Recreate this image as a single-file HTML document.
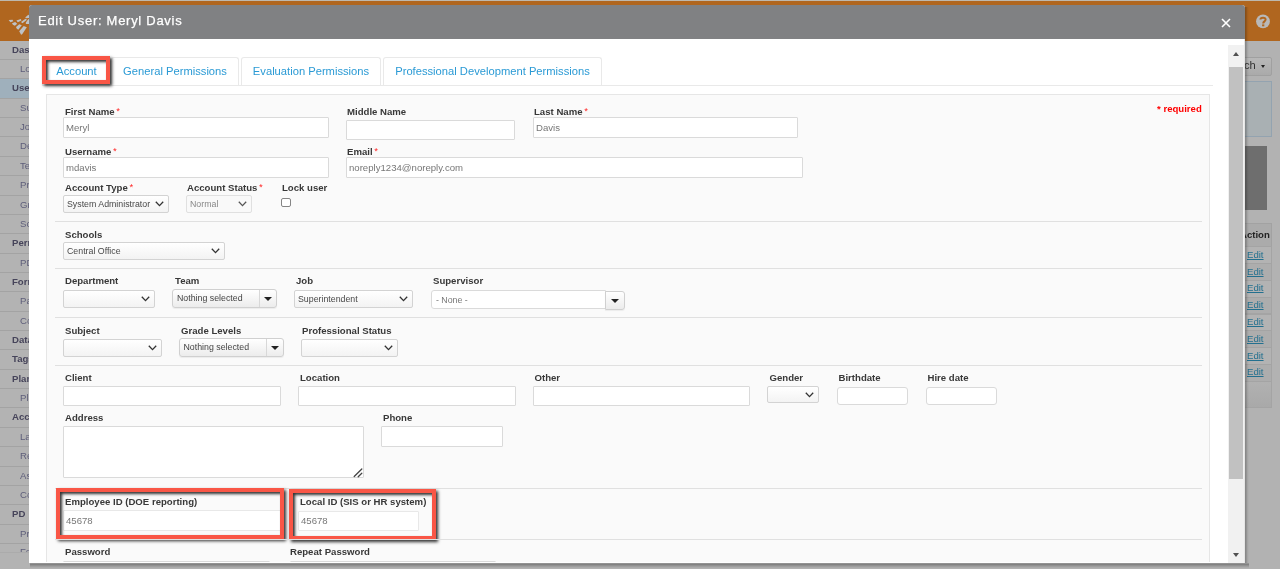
<!DOCTYPE html>
<html><head><meta charset="utf-8">
<style>
*{box-sizing:border-box;margin:0;padding:0}
html,body{width:1280px;height:569px;overflow:hidden;background:#b2b2b2;font-family:"Liberation Sans",sans-serif;-webkit-font-smoothing:antialiased}
.a{position:absolute}
.si{position:absolute;left:0;width:30px;height:19.36px;border-bottom:1px solid #a3a3a3;font-size:9.6px;color:#5e5e7a;white-space:nowrap;overflow:hidden;line-height:17.5px}
.si.b{font-weight:bold;color:#46445a}
.lbl{position:absolute;font-size:9.6px;font-weight:bold;color:#383838;white-space:nowrap;line-height:11px}
.req{color:#f22;font-weight:normal;font-size:9.6px;margin-left:-1px;position:relative;top:-1px}
.inp{position:absolute;background:#fff;border:1px solid #dadada;border-radius:1px;font-size:9.6px;color:#777;white-space:nowrap;padding-left:2px;padding-top:1px;line-height:18px}
.sel{position:absolute;background:linear-gradient(#fff,#f3f3f3);border:1px solid #d3d3d3;border-radius:2px;font-size:8.8px;color:#484848;white-space:nowrap;padding-left:3px;line-height:16px}
.chev{position:absolute;top:5px;width:9px;height:6px}
.sep{position:absolute;left:55px;width:1147px;height:1px;background:#e0e0e0}
.tab{position:absolute;top:56.5px;height:28.5px;border:1px solid #e9e9e9;border-bottom:none;border-radius:3px 3px 0 0;background:#fff;font-size:11.2px;color:#2a9ad5;white-space:nowrap;line-height:26px;text-align:center}
.redbox{position:absolute;border:4px solid #f95646;box-shadow:2px 2px 3px rgba(0,0,0,.8), inset 2px 2px 3px rgba(0,0,0,.8)}
.bs{position:absolute;background:linear-gradient(#fff,#ececec);border:1px solid #d0d0d0;border-radius:3px;box-shadow:0 1px 1px rgba(0,0,0,.06);font-size:8.8px;color:#444;white-space:nowrap;line-height:17px;padding-left:4px}
.bs i{position:absolute;top:0;bottom:0;width:0;border-left:1px solid #d8d8d8}
.caret{position:absolute;width:0;height:0;border-left:4px solid transparent;border-right:4px solid transparent;border-top:4px solid #222}
</style></head><body>
<div id="root" style="position:absolute;left:0;top:0;width:1280px;height:569px;overflow:hidden;will-change:transform">
<div class="a" style="left:0;top:0;width:1280px;height:1px;background:#bdb8ad"></div>
<div class="a" style="left:0;top:1px;width:1280px;height:40px;background:#b0661f"></div>
<svg class="a" style="left:0;top:0" width="30" height="40" viewBox="0 0 30 40">
 <g fill="#bec2c6">
  <polygon points="8.7,20.1 12.6,19.7 13.3,21.3 10.4,22.2"/>
  <polygon points="16.4,20.4 20.8,19.0 21.4,20.6 17.8,22.2"/>
  <polygon points="21.0,21.9 25.4,18.8 27.0,19.8 22.4,23.3"/>
  <polygon points="25.2,17.4 28.3,14.7 29,15.2 29,17.9 26.2,18.2"/>
  <polygon points="12.0,23.3 15.1,22.0 17.2,23.8 14.9,25.8 12.9,24.8"/>
  <polygon points="16.0,27.1 19.3,24.2 21.8,25.2 18.3,29.8 16.8,28.8"/>
  <polygon points="25.6,22.9 28.1,19.2 29,19.2 29,23.9 26.2,23.9"/>
  <polygon points="19.2,31.3 23.7,26.1 26.8,27.2 22.2,34.2 21.1,34.7"/>
 </g>
</svg>
<svg class="a" style="left:1255px;top:14px" width="16" height="16" viewBox="0 0 16 16"><circle cx="8" cy="7.4" r="6.9" fill="#b9b9b9"/><path d="M5.4 5.6C5.4 3.2 10.6 3.0 10.6 5.6C10.6 7.4 8.2 7.3 8.2 9.4" fill="none" stroke="#b0661f" stroke-width="2"/><rect x="7.1" y="10.4" width="2.2" height="1.9" fill="#b0661f"/></svg>
<div class="a" style="left:0;top:41px;width:30px;height:528px;background:#b3b3b3"></div>
<div class="si b" style="top:40.64px"><span style="position:absolute;left:12px">Dashboard</span></div>
<div class="si" style="top:60.00px"><span style="position:absolute;left:20px">Login As</span></div>
<div class="si b" style="top:79.36px;background:#9fb0bc"><span style="position:absolute;left:12px">Users</span></div>
<div class="si" style="top:98.72px"><span style="position:absolute;left:20px">Summary</span></div>
<div class="si" style="top:118.08px"><span style="position:absolute;left:20px">Jobs</span></div>
<div class="si" style="top:137.44px"><span style="position:absolute;left:20px">Departments</span></div>
<div class="si" style="top:156.80px"><span style="position:absolute;left:20px">Teams</span></div>
<div class="si" style="top:176.16px"><span style="position:absolute;left:20px">Professional</span></div>
<div class="si" style="top:195.52px"><span style="position:absolute;left:20px">Grade</span></div>
<div class="si" style="top:214.88px"><span style="position:absolute;left:20px">Schools</span></div>
<div class="si b" style="top:234.24px"><span style="position:absolute;left:12px">Permissions</span></div>
<div class="si" style="top:253.60px"><span style="position:absolute;left:20px">PD</span></div>
<div class="si b" style="top:272.96px"><span style="position:absolute;left:12px">Forms</span></div>
<div class="si" style="top:292.32px"><span style="position:absolute;left:20px">Pages</span></div>
<div class="si" style="top:311.68px"><span style="position:absolute;left:20px">Components</span></div>
<div class="si b" style="top:331.04px"><span style="position:absolute;left:12px">Data</span></div>
<div class="si b" style="top:350.40px"><span style="position:absolute;left:12px">Tags</span></div>
<div class="si b" style="top:369.76px"><span style="position:absolute;left:12px">Plans</span></div>
<div class="si" style="top:389.12px"><span style="position:absolute;left:20px">Plan</span></div>
<div class="si b" style="top:408.48px"><span style="position:absolute;left:12px">Accounts</span></div>
<div class="si" style="top:427.84px"><span style="position:absolute;left:20px">Languages</span></div>
<div class="si" style="top:447.20px"><span style="position:absolute;left:20px">Reports</span></div>
<div class="si" style="top:466.56px"><span style="position:absolute;left:20px">Assessments</span></div>
<div class="si" style="top:485.92px"><span style="position:absolute;left:20px">Config</span></div>
<div class="si b" style="top:505.28px"><span style="position:absolute;left:12px">PD</span></div>
<div class="si" style="top:524.64px"><span style="position:absolute;left:20px">Programs</span></div>
<div class="a" style="left:0;top:544px;width:30px;height:9px;overflow:hidden"><div class="si" style="top:0;border-bottom:none;line-height:15px"><span style="position:absolute;left:20px">Forms</span></div></div>
<div class="a" style="left:0;top:552px;width:30px;height:1px;background:#ababab"></div>
<!-- background right content -->
<div class="a" style="left:1230px;top:57px;width:42px;height:18.5px;background:linear-gradient(#b8b8b8,#aaaaaa);border:1px solid #a0a0a0;border-radius:2px;font-size:11.2px;color:#333;line-height:15px;padding-left:13px;white-space:nowrap">ch</div>
<div class="caret a" style="left:1260.5px;top:65px;border-left-width:2.7px;border-right-width:2.7px;border-top:3.4px solid #222"></div>
<div class="a" style="left:1230px;top:81px;width:42px;height:55.5px;background:#a9b0b3;border:1px solid #93a3b0"></div>
<div class="a" style="left:1230px;top:146px;width:37.3px;height:63.6px;background:#6e6e6e"></div>
<div class="a" style="left:1230px;top:222.6px;width:42px;height:24px;background:#ababab;border:1px solid #a2a2a2;border-left:none;font-size:9.6px;font-weight:bold;color:#222;line-height:22px;padding-left:10px;white-space:nowrap">Action</div>
<div class="a" style="left:1230px;top:246.3px;width:42px;height:17.8px;background:#b3b3b3;border:1px solid #a4a4a4;border-left:none"></div>
<div class="a" style="left:1247px;top:248.8px;font-size:9.6px;color:#23708f;text-decoration:underline;line-height:11px">Edit</div>
<div class="a" style="left:1230px;top:263.1px;width:42px;height:17.8px;background:#adadad;border:1px solid #a4a4a4;border-left:none"></div>
<div class="a" style="left:1247px;top:265.6px;font-size:9.6px;color:#23708f;text-decoration:underline;line-height:11px">Edit</div>
<div class="a" style="left:1230px;top:279.9px;width:42px;height:17.8px;background:#b3b3b3;border:1px solid #a4a4a4;border-left:none"></div>
<div class="a" style="left:1247px;top:282.4px;font-size:9.6px;color:#23708f;text-decoration:underline;line-height:11px">Edit</div>
<div class="a" style="left:1230px;top:296.7px;width:42px;height:17.8px;background:#adadad;border:1px solid #a4a4a4;border-left:none"></div>
<div class="a" style="left:1247px;top:299.2px;font-size:9.6px;color:#23708f;text-decoration:underline;line-height:11px">Edit</div>
<div class="a" style="left:1230px;top:313.5px;width:42px;height:17.8px;background:#b3b3b3;border:1px solid #a4a4a4;border-left:none"></div>
<div class="a" style="left:1247px;top:316.0px;font-size:9.6px;color:#23708f;text-decoration:underline;line-height:11px">Edit</div>
<div class="a" style="left:1230px;top:330.3px;width:42px;height:17.8px;background:#adadad;border:1px solid #a4a4a4;border-left:none"></div>
<div class="a" style="left:1247px;top:332.8px;font-size:9.6px;color:#23708f;text-decoration:underline;line-height:11px">Edit</div>
<div class="a" style="left:1230px;top:347.1px;width:42px;height:17.8px;background:#b3b3b3;border:1px solid #a4a4a4;border-left:none"></div>
<div class="a" style="left:1247px;top:349.6px;font-size:9.6px;color:#23708f;text-decoration:underline;line-height:11px">Edit</div>
<div class="a" style="left:1230px;top:363.9px;width:42px;height:17.8px;background:#adadad;border:1px solid #a4a4a4;border-left:none"></div>
<div class="a" style="left:1247px;top:366.4px;font-size:9.6px;color:#23708f;text-decoration:underline;line-height:11px">Edit</div>
<div class="a" style="left:1230px;top:380.7px;width:42px;height:27.1px;background:linear-gradient(#b1b1b1,#a9a9a9);border:1px solid #a4a4a4;border-left:none"></div>
<!-- modal -->
<div class="a" style="left:29px;top:5px;width:1216px;height:557.7px;background:#fff;border-radius:3px 3px 0 0"></div>
<div class="a" style="left:30px;top:562.7px;width:1219px;height:5px;background:linear-gradient(rgba(0,0,0,.12),rgba(0,0,0,.27) 30%,rgba(0,0,0,.12) 65%,rgba(0,0,0,0))"></div>
<div class="a" style="left:1245px;top:7px;width:4px;height:556px;background:linear-gradient(90deg,rgba(0,0,0,.26),rgba(0,0,0,.18) 35%,rgba(0,0,0,.06) 65%,rgba(0,0,0,0))"></div>
<div class="a" style="left:29px;top:5px;width:1216px;height:33.5px;background:#808183;border-radius:3px 3px 0 0"></div>
<div class="a" style="left:38px;top:12px;font-size:13px;letter-spacing:0.72px;-webkit-text-stroke:0.25px #fff;color:#fff;white-space:nowrap;line-height:18px">Edit User: Meryl Davis</div>
<svg class="a" style="left:1221px;top:18px" width="10" height="10" viewBox="0 0 10 10"><path d="M1 1L9 9M9 1L1 9" stroke="#fff" stroke-width="1.6"/></svg>

<div class="a" style="left:0;top:0;width:1245px;height:561.8px;overflow:hidden">
<!-- tabs -->
<!--tabline-->
<div class="tab" style="left:42px;width:69px">Account</div>
<div class="tab" style="left:111px;width:128px">General Permissions</div>
<div class="tab" style="left:241px;width:140px">Evaluation Permissions</div>
<div class="tab" style="left:383px;width:219px">Professional Development Permissions</div>
<div class="a" style="left:42px;top:85px;width:1171px;height:1px;background:#e9e9e9"></div>
<div class="redbox" style="left:42px;top:55.5px;width:68px;height:28.5px"></div>

<!-- panel -->
<div class="a" style="left:46px;top:94.3px;width:1164px;height:480px;background:#fafafa;border:1px solid #e6e6e6"></div>
<div class="a" style="left:1157px;top:103px;font-size:9.6px;font-weight:bold;color:#f00;white-space:nowrap">* required</div>

<div class="lbl" style="left:65px;top:106px">First Name <span class="req">*</span></div>
<div class="inp" style="left:63px;top:117px;width:266px;height:21px">Meryl</div>
<div class="lbl" style="left:347px;top:106px">Middle Name</div>
<div class="inp" style="left:346px;top:120px;width:169px;height:20px"></div>
<div class="lbl" style="left:534px;top:106px">Last Name <span class="req">*</span></div>
<div class="inp" style="left:533px;top:117px;width:265px;height:21px">Davis</div>

<div class="lbl" style="left:65px;top:146px">Username <span class="req">*</span></div>
<div class="inp" style="left:63px;top:157px;width:266px;height:21px">mdavis</div>
<div class="lbl" style="left:347px;top:146px">Email <span class="req">*</span></div>
<div class="inp" style="left:346px;top:157px;width:457px;height:21px">noreply1234@noreply.com</div>

<div class="lbl" style="left:65px;top:182px">Account Type <span class="req">*</span></div>
<div class="sel" style="left:63px;top:194.5px;width:106px;height:18px">System Administrator<svg class="chev" style="left:91px" viewBox="0 0 9 6"><path d="M0.8 0.8L4.5 4.6L8.2 0.8" fill="none" stroke="#333" stroke-width="1.35"/></svg></div>
<div class="lbl" style="left:187px;top:182px">Account Status <span class="req">*</span></div>
<div class="sel" style="left:186px;top:194.5px;width:66px;height:18px;color:#888;border-color:#e0e0e0;background:#f9f9f9">Normal<svg class="chev" style="left:51px" viewBox="0 0 9 6"><path d="M0.8 0.8L4.5 4.6L8.2 0.8" fill="none" stroke="#555" stroke-width="1.3"/></svg></div>
<div class="lbl" style="left:282px;top:182px">Lock user</div>
<div class="a" style="left:281px;top:197.8px;width:9.6px;height:9.4px;border:1px solid #858585;border-radius:2px;background:#fff"></div>

<div class="sep" style="top:220.5px"></div>
<div class="lbl" style="left:65px;top:229px">Schools</div>
<div class="sel" style="left:63px;top:242px;width:162px;height:18px">Central Office<svg class="chev" style="left:147px" viewBox="0 0 9 6"><path d="M0.8 0.8L4.5 4.6L8.2 0.8" fill="none" stroke="#333" stroke-width="1.35"/></svg></div>

<div class="sep" style="top:268px"></div>
<div class="lbl" style="left:65px;top:275px">Department</div>
<div class="sel" style="left:63px;top:290px;width:92px;height:17.5px"><svg class="chev" style="left:77px" viewBox="0 0 9 6"><path d="M0.8 0.8L4.5 4.6L8.2 0.8" fill="none" stroke="#333" stroke-width="1.35"/></svg></div>
<div class="lbl" style="left:175px;top:275px">Team</div>
<div class="bs" style="left:172px;top:289px;width:105px;height:19px">Nothing selected<i style="left:86px"></i><span class="caret" style="left:91px;top:7px"></span></div>
<div class="lbl" style="left:296px;top:275px">Job</div>
<div class="sel" style="left:294px;top:290px;width:119px;height:17.5px">Superintendent<svg class="chev" style="left:104px" viewBox="0 0 9 6"><path d="M0.8 0.8L4.5 4.6L8.2 0.8" fill="none" stroke="#333" stroke-width="1.35"/></svg></div>
<div class="lbl" style="left:433px;top:275px">Supervisor</div>
<div class="inp" style="left:431px;top:290px;width:175px;height:19px;color:#777;font-size:8.8px;padding-left:4px;line-height:17px;border-radius:3px 0 0 3px">- None -</div>
<div class="bs" style="left:605px;top:291px;width:20px;height:19px;border-radius:0 3px 3px 0"><span class="caret" style="left:5px;top:7px"></span></div>

<div class="sep" style="top:317px"></div>
<div class="lbl" style="left:65px;top:325px">Subject</div>
<div class="sel" style="left:63px;top:339px;width:99px;height:17.5px"><svg class="chev" style="left:84px" viewBox="0 0 9 6"><path d="M0.8 0.8L4.5 4.6L8.2 0.8" fill="none" stroke="#333" stroke-width="1.35"/></svg></div>
<div class="lbl" style="left:181px;top:325px">Grade Levels</div>
<div class="bs" style="left:178.5px;top:338px;width:105px;height:19px">Nothing selected<i style="left:86px"></i><span class="caret" style="left:91px;top:7px"></span></div>
<div class="lbl" style="left:302px;top:325px">Professional Status</div>
<div class="sel" style="left:300.5px;top:339px;width:97px;height:17.5px"><svg class="chev" style="left:82px" viewBox="0 0 9 6"><path d="M0.8 0.8L4.5 4.6L8.2 0.8" fill="none" stroke="#333" stroke-width="1.35"/></svg></div>

<div class="sep" style="top:364.5px"></div>
<div class="lbl" style="left:65px;top:372px">Client</div>
<div class="inp" style="left:63px;top:386px;width:218px;height:20px"></div>
<div class="lbl" style="left:300px;top:372px">Location</div>
<div class="inp" style="left:298px;top:386px;width:218px;height:20px"></div>
<div class="lbl" style="left:534.5px;top:372px">Other</div>
<div class="inp" style="left:532.5px;top:386px;width:217px;height:20px"></div>
<div class="lbl" style="left:769.5px;top:372px">Gender</div>
<div class="sel" style="left:767px;top:386px;width:52px;height:17px"><svg class="chev" style="left:37px" viewBox="0 0 9 6"><path d="M0.8 0.8L4.5 4.6L8.2 0.8" fill="none" stroke="#333" stroke-width="1.35"/></svg></div>
<div class="lbl" style="left:838.5px;top:372px">Birthdate</div>
<div class="inp" style="left:836.5px;top:387px;width:71px;height:18px;border-radius:3px"></div>
<div class="lbl" style="left:927.5px;top:372px">Hire date</div>
<div class="inp" style="left:925.5px;top:387px;width:71.5px;height:18px;border-radius:3px"></div>

<div class="lbl" style="left:65px;top:412px">Address</div>
<div class="inp" style="left:63px;top:426px;width:300.5px;height:52px"></div>
<svg class="a" style="left:350px;top:465px" width="14" height="14" viewBox="0 0 14 14"><path d="M4.2 11.5L11.8 4M8.2 11.7L11.8 8.2" stroke="#444" stroke-width="1.3" stroke-linecap="round"/></svg>
<div class="lbl" style="left:383px;top:412px">Phone</div>
<div class="inp" style="left:381px;top:426px;width:122px;height:21px"></div>

<div class="sep" style="top:488px"></div>
<div class="lbl" style="left:65px;top:496px">Employee ID (DOE reporting)</div>
<div class="inp" style="left:63px;top:510px;width:218px;height:21px;border-color:#e8e8e8">45678</div>
<div class="lbl" style="left:300px;top:496px">Local ID (SIS or HR system)</div>
<div class="inp" style="left:298px;top:511px;width:121px;height:20px;border-color:#e8e8e8;padding-top:0">45678</div>
<div class="redbox" style="left:55.5px;top:488px;width:228.5px;height:51px"></div>
<div class="redbox" style="left:289px;top:489px;width:147px;height:50.5px"></div>

<div class="sep" style="top:539px"></div>
<div class="lbl" style="left:65px;top:545.5px">Password</div>
<div class="inp" style="left:63px;top:560.8px;width:207px;height:20px"></div>
<div class="lbl" style="left:290px;top:545.5px">Repeat Password</div>
<div class="inp" style="left:289.5px;top:560.8px;width:206px;height:20px"></div>
</div>

<!-- scrollbar -->
<div class="a" style="left:1228px;top:45px;width:16px;height:517.7px;background:#f1f1f1"></div><div class="a" style="left:1244px;top:38.5px;width:1px;height:524.2px;background:#e6e6e6"></div>
<div class="a" style="left:1229px;top:67px;width:14px;height:411.7px;background:#c1c1c1"></div>
<div class="caret a" style="left:1232.7px;top:52px;border-left-width:3.6px;border-right-width:3.6px;border-top:none;border-bottom:4.2px solid #505050"></div>
<div class="caret a" style="left:1233px;top:552.5px;border-left-width:3.5px;border-right-width:3.5px;border-top:4.2px solid #505050"></div>

</div>
</body></html>
